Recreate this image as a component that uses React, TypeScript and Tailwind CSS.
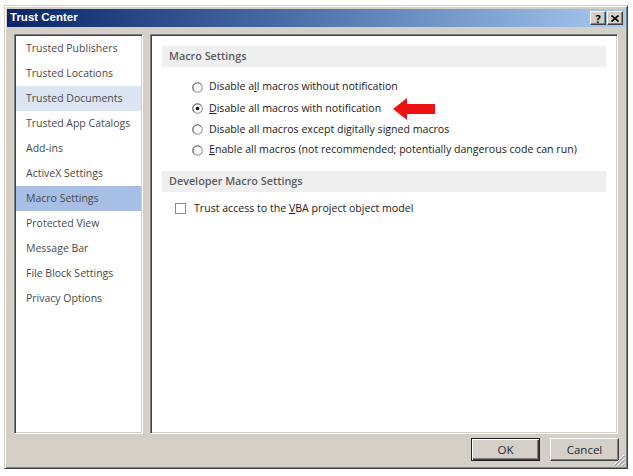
import React from 'react';

const navItems = [
  'Trusted Publishers',
  'Trusted Locations',
  'Trusted Documents',
  'Trusted App Catalogs',
  'Add-ins',
  'ActiveX Settings',
  'Macro Settings',
  'Protected View',
  'Message Bar',
  'File Block Settings',
  'Privacy Options',
];

const Radio: React.FC<{ checked?: boolean }> = ({ checked }) => (
  <svg width="11" height="11" viewBox="0 0 12 12" className="shrink-0">
    <circle cx="6" cy="6" r="5.2" fill="#fff" stroke="#9a9a9a" strokeWidth="1.2" />
    <path d="M2.4 9.6 A5 5 0 0 1 9.6 2.4" fill="none" stroke="#6a6a6a" strokeWidth="1" />
    {checked && <circle cx="6" cy="6" r="1.9" fill="#111" />}
  </svg>
);

const RadioRow: React.FC<{ checked?: boolean; children: React.ReactNode }> = ({ checked, children }) => (
  <div className="flex h-[20.5px] items-center gap-[6px] whitespace-nowrap">
    <Radio checked={checked} />
    <span>{children}</span>
  </div>
);

const SectionHeader: React.FC<{ title: string }> = ({ title }) => (
  <div className="flex h-[21px] items-center bg-[#efefef] pl-[7px] text-[10.8px] font-semibold text-[#5b5b5b]">
    {title}
  </div>
);

const TitleButton: React.FC<{ children: React.ReactNode }> = ({ children }) => (
  <div className="flex h-[14px] w-[16px] items-center justify-center border border-t-white border-l-white border-r-[#404040] border-b-[#404040] bg-[#d4d0c8] text-[11px] font-bold leading-none text-black shadow-[inset_-1px_-1px_0_#808080]">
    {children}
  </div>
);

const DialogButton: React.FC<{ label: string; primary?: boolean }> = ({ label, primary }) => (
  <div
    className={
      'flex h-[23px] w-[69px] items-center justify-center bg-[#d4d0c8] text-[11.5px] text-[#1e2a3a] ' +
      (primary
        ? 'border border-[#202020] shadow-[inset_1px_1px_0_#fff,inset_-1px_-1px_0_#404040,inset_-2px_-2px_0_#808080]'
        : 'border border-t-white border-l-white border-r-[#404040] border-b-[#404040] shadow-[inset_-1px_-1px_0_#808080]')
    }
  >
    {label}
  </div>
);

export default function App() {
  return (
    <div className="h-[476px] w-[633px] bg-white pl-[4px] pt-[5px] font-['Open_Sans',sans-serif]">
      <div className="flex h-[464px] w-[624px] flex-col border border-t-[#d4d0c8] border-l-[#d4d0c8] border-r-[#404040] border-b-[#404040] bg-[#d4d0c8] p-[2px] shadow-[inset_1px_1px_0_#fff,inset_-1px_-1px_0_#808080]">
        {/* title bar */}
        <div className="mt-[1px] flex h-[18px] items-center justify-between bg-gradient-to-r from-[#0a246a] to-[#a6caf0] pl-[3px] pr-[2px]">
          <span className="font-['Liberation_Sans',sans-serif] text-[11.5px] font-bold text-white">Trust Center</span>
          <div className="flex">
            <TitleButton>?</TitleButton>
            <div className="w-[1px]" />
            <TitleButton>
              <svg width="8" height="7" viewBox="0 0 8 7">
                <path d="M0.5 0.5 L7.5 6.5 M7.5 0.5 L0.5 6.5" stroke="#000" strokeWidth="1.6" />
              </svg>
            </TitleButton>
          </div>
        </div>

        {/* body */}
        <div className="flex gap-[7px] px-[7px] pt-[7px]">
          <div className="h-[400px] w-[129px] border border-t-[#808080] border-l-[#808080] border-r-white border-b-white bg-white shadow-[inset_1px_1px_0_#404040,inset_-1px_-1px_0_#d4d0c8]">
            <div className="pt-[1px] pl-[1px] pr-[1px]">
              {navItems.map((item) => (
                <div
                  key={item}
                  className={
                    'flex h-[25px] items-center pl-[10px] text-[10.5px] text-[#4a4a4a] ' +
                    (item === 'Trusted Documents'
                      ? 'bg-[#dbe5f3]'
                      : item === 'Macro Settings'
                        ? 'bg-[#a7bfe4]'
                        : '')
                  }
                >
                  {item}
                </div>
              ))}
            </div>
          </div>

          <div className="h-[400px] w-[468px] border border-t-[#808080] border-l-[#808080] border-r-white border-b-white bg-white shadow-[inset_1px_1px_0_#404040,inset_-1px_-1px_0_#d4d0c8]">
            <div className="px-[11px] pt-[11px] text-[10.6px] text-[#222]">
              <SectionHeader title="Macro Settings" />
              <div className="pl-[30px] pt-[10px]">
                <RadioRow>
                  Disable a<u>l</u>l macros without notification
                </RadioRow>
                <div className="flex items-center">
                  <RadioRow checked>
                    <u>D</u>isable all macros with notification
                  </RadioRow>
                  <svg width="42" height="22" viewBox="0 0 42 22" className="ml-[12px]">
                    <path d="M0 11 L14 0 L14 6 L42 6 L42 16 L14 16 L14 22 Z" fill="#ee1111" />
                  </svg>
                </div>
                <RadioRow>Disable all macros except digitally signed macros</RadioRow>
                <RadioRow>
                  <u>E</u>nable all macros (not recommended; potentially dangerous code can run)
                </RadioRow>
              </div>

              <div className="pt-[10px]">
                <SectionHeader title="Developer Macro Settings" />
              </div>
              <div className="flex h-[34px] items-center gap-[8px] pl-[13px]">
                <div className="h-[11px] w-[11px] border border-[#8a8a8a] bg-white" />
                <span>
                  Trust access to the <u>V</u>BA project object model
                </span>
              </div>
            </div>
          </div>
        </div>

        {/* buttons */}
        <div className="relative flex flex-1 justify-end gap-[10px] pr-[6px] pt-[4px]">
          <DialogButton label="OK" primary />
          <DialogButton label="Cancel" />
          <svg width="12" height="12" viewBox="0 0 12 12" className="absolute bottom-[0px] right-[0px]">
            <path d="M11 1 L1 11 M11 5 L5 11 M11 9 L9 11" stroke="#fff" strokeWidth="1" />
            <path d="M11.8 1.8 L1.8 11.8 M11.8 5.8 L5.8 11.8 M11.8 9.8 L9.8 11.8" stroke="#808080" strokeWidth="1" />
          </svg>
        </div>
      </div>
    </div>
  );
}
